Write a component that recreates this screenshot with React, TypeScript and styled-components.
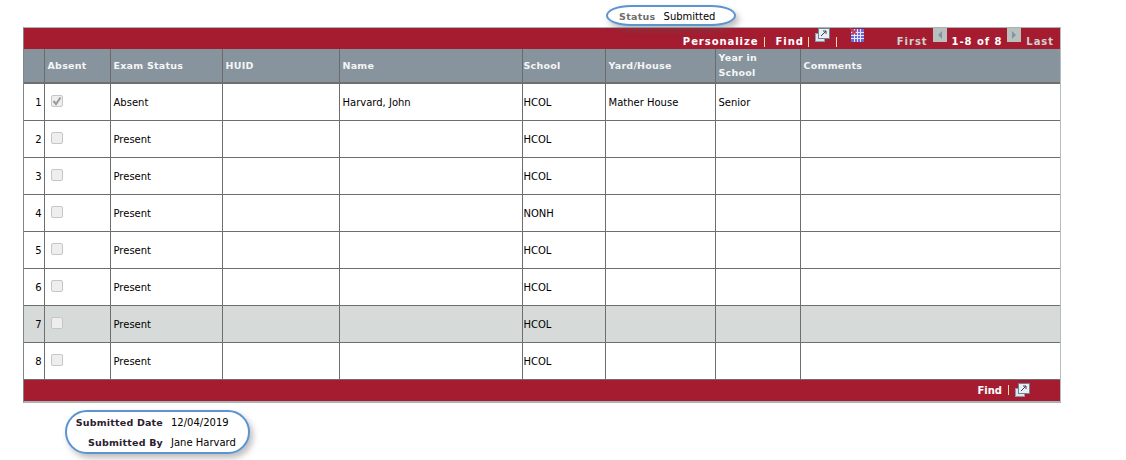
import React from "react";
import styled, { createGlobalStyle } from "styled-components";

const Global = createGlobalStyle`
  html, body { margin: 0; padding: 0; background: #fff; }
  body { font-family: "DejaVu Sans", Verdana, sans-serif; font-size: 10px; color: #000; height: 460px; overflow: hidden; }
`;

const Page = styled.div`
  width: 1126px;
  height: 460px;
  padding: 5px 0 0 23px;
  box-sizing: border-box;
  overflow: hidden;
`;

const StatusRow = styled.div`
  display: flex;
  height: 22px;
  padding-left: 583px;
`;

const Oval = styled.div<{ $w: number; $h: number; $r: string }>`
  box-sizing: border-box;
  width: ${(p) => p.$w}px;
  height: ${(p) => p.$h}px;
  border: 2px solid #5b93d3;
  border-radius: ${(p) => p.$r};
  background: #fff;
  box-shadow: 3px 4px 6px rgba(90, 90, 90, 0.4);
`;

const StatusOval = styled(Oval)`
  display: flex;
  align-items: center;
  padding: 3px 0 0 11px;
  gap: 8px;
  line-height: 12px;
`;

const StatusLabel = styled.span`
  font-weight: 700;
  font-size: 9.5px;
  letter-spacing: 0.3px;
  color: #6e6e6e;
`;

const Grid = styled.div`
  width: 1038px;
  box-sizing: border-box;
  border: 1px solid #a9b4b2;
  border-bottom-width: 2px;
  border-right-color: #b5bebc;
  border-left-color: #7d8886;
`;

const Bar = styled.div<{ $h: number }>`
  height: ${(p) => p.$h}px;
  background: #a51c30;
  display: flex;
  justify-content: flex-end;
  color: #fff;
  font-weight: 700;
  box-sizing: border-box;
`;

const TopBar = styled(Bar)`
  align-items: flex-end;
  padding: 0 6px 0 0;
  line-height: 14px;
  letter-spacing: 0.95px;
`;

const BottomBar = styled(Bar)`
  align-items: center;
  padding: 0 30px 0 0;
`;

const Sep = styled.span<{ $l: number; $r: number }>`
  display: block;
  flex: none;
  width: 1px;
  height: 10px;
  background: #f5dca0;
  margin: 0 ${(p) => p.$r}px 2px ${(p) => p.$l}px;
`;

const BottomSep = styled(Sep)`
  margin-bottom: 0;
`;

const BarText = styled.span<{ $dim?: boolean; $l?: number }>`
  flex: none;
  color: ${(p) => (p.$dim ? "#cfd3d2" : "#fff")};
  margin-left: ${(p) => p.$l ?? 0}px;
`;

const ToolIcon = styled.svg<{ $l?: number }>`
  display: block;
  align-self: flex-start;
  margin: 0 0 0 ${(p) => p.$l ?? 0}px;
  flex: none;
`;

const BottomIcon = styled(ToolIcon)`
  align-self: center;
`;

const Table = styled.table`
  border-collapse: collapse;
  table-layout: fixed;
  width: 1036px;
`;

const Th = styled.th<{ $tight?: boolean }>`
  background: #87949e;
  color: #f4f6f6;
  font-weight: 700;
  font-size: 9.5px;
  line-height: 15px;
  letter-spacing: 0.25px;
  text-align: left;
  padding: 0 3px 1px ${(p) => (p.$tight ? 1 : 3)}px;
  height: 34px;
  box-sizing: border-box;
  border-left: 1px solid #6b6b6b;
  border-bottom: 2px solid #6f6f6f;
  &:first-child { border-left: 0; }
`;

const Tr = styled.tr<{ $shade?: boolean }>`
  background: ${(p) => (p.$shade ? "#d6dbd9" : "#fff")};
`;

const Td = styled.td<{ $tight?: boolean }>`
  height: 37px;
  padding: 3px 3px 0 ${(p) => (p.$tight ? 1 : 3)}px;
  box-sizing: border-box;
  border-left: 1px solid #6e6e6e;
  border-bottom: 1px solid #6e6e6e;
  vertical-align: middle;
  line-height: 12px;
  white-space: nowrap;
  &:first-child { border-left: 0; }
`;

const NumTd = styled(Td)`
  text-align: right;
  padding: 2px 2px 0 0;
`;

const CheckTd = styled(Td)`
  padding: 0 0 1px 6px;
`;

const Check = styled.span`
  display: block;
  box-sizing: border-box;
  width: 12px;
  height: 12px;
  border: 1px solid #c6c6c6;
  border-radius: 2px;
  background: #eeeeee;
`;

const Tick = styled.svg`
  display: block;
`;

const Meta = styled.div`
  margin: 7px 0 0 42px;
`;

const MetaOval = styled(Oval)`
  display: grid;
  grid-template-columns: 96px auto;
  column-gap: 8px;
  align-content: center;
  row-gap: 8px;
  padding-top: 2px;
  line-height: 12px;
`;

const MetaLabel = styled.span`
  font-weight: 700;
  font-size: 9.5px;
  letter-spacing: 0.2px;
  text-align: right;
  white-space: nowrap;
  color: #2b2030;
`;

const PopGlyph = () => (
  <>
    <rect x="0.5" y="5.5" width="9" height="8" fill="#dfe6ea" stroke="#8a9ab0" />
    <rect x="3.5" y="0.5" width="11" height="10" fill="#e8eef2" stroke="#6f819c" />
    <path d="M6 8 L11 3 M8 3 H11 V6" fill="none" stroke="#444" strokeWidth="1" />
  </>
);

const GridIcon = () => (
  <ToolIcon width="14" height="14" viewBox="0 0 14 14" $l={13}>
    <rect x="1" y="1" width="13" height="13" fill="#6a6adc" />
    <path d="M1 4.5H14M1 7.5H14M1 10.5H14M4.5 1V14M7.5 1V14M10.5 1V14" stroke="#e6e6fa" strokeWidth="1" />
    <path d="M0 0 L5 5 M2 5 H5 V2" stroke="#e03030" strokeWidth="1.4" fill="none" />
  </ToolIcon>
);

const ArrowBtn = ({ dir, l }: { dir: "l" | "r"; l: number }) => (
  <ToolIcon width="14" height="14" viewBox="0 0 14 14" $l={l}>
    <rect width="14" height="14" fill="#b9c1bf" />
    <path d={dir === "l" ? "M9 3 V11 L5 7 Z" : "M5 3 V11 L9 7 Z"} fill="#87949e" />
  </ToolIcon>
);

const widths = [20, 66, 112, 117, 183, 83, 110, 85, 260];
const heads = ["", "Absent", "Exam Status", "HUID", "Name", "School", "Yard/House", "Year in School", "Comments"];
const rows: { status: string; school: string; name?: string; yard?: string; year?: string; on?: boolean; shade?: boolean }[] = [
  { status: "Absent", school: "HCOL", name: "Harvard, John", yard: "Mather House", year: "Senior", on: true },
  { status: "Present", school: "HCOL" },
  { status: "Present", school: "HCOL" },
  { status: "Present", school: "NONH" },
  { status: "Present", school: "HCOL" },
  { status: "Present", school: "HCOL" },
  { status: "Present", school: "HCOL", shade: true },
  { status: "Present", school: "HCOL" },
];

export default function App() {
  return (
    <Page>
      <Global />
      <StatusRow>
        <StatusOval $w={130} $h={21} $r="26px / 11px">
          <StatusLabel>Status</StatusLabel>
          <span>Submitted</span>
        </StatusOval>
      </StatusRow>
      <Grid>
        <TopBar $h={21}>
          <BarText>Personalize</BarText>
          <Sep $l={5} $r={11} />
          <BarText>Find</BarText>
          <Sep $l={4} $r={6} />
          <ToolIcon width="15" height="14" viewBox="0 0 15 14"><PopGlyph /></ToolIcon>
          <Sep $l={6} $r={0} />
          <GridIcon />
          <BarText $dim $l={33}>First</BarText>
          <ArrowBtn dir="l" l={5} />
          <BarText $l={5}>1-8 of 8</BarText>
          <ArrowBtn dir="r" l={5} />
          <BarText $dim $l={5}>Last</BarText>
        </TopBar>
        <Table>
          <colgroup>
            {widths.map((w, i) => (
              <col key={i} style={{ width: w }} />
            ))}
          </colgroup>
          <thead>
            <tr>
              {heads.map((h, i) => (
                <Th key={i} $tight={h === "School"}>{h}</Th>
              ))}
            </tr>
          </thead>
          <tbody>
            {rows.map((r, i) => (
              <Tr key={i} $shade={r.shade}>
                <NumTd>{i + 1}</NumTd>
                <CheckTd>
                  <Check>
                    {r.on && (
                      <Tick width="10" height="10" viewBox="0 0 10 10">
                        <path d="M1.5 5 L4 8 L8.5 1.5" fill="none" stroke="#9a9a9a" strokeWidth="2" />
                      </Tick>
                    )}
                  </Check>
                </CheckTd>
                <Td>{r.status}</Td>
                <Td />
                <Td>{r.name}</Td>
                <Td $tight>{r.school}</Td>
                <Td>{r.yard}</Td>
                <Td>{r.year}</Td>
                <Td />
              </Tr>
            ))}
          </tbody>
        </Table>
        <BottomBar $h={21}>
          <BarText>Find</BarText>
          <BottomSep $l={6} $r={6} />
          <BottomIcon width="15" height="14" viewBox="0 0 15 14"><PopGlyph /></BottomIcon>
        </BottomBar>
      </Grid>
      <Meta>
        <MetaOval $w={185} $h={44} $r="22px">
          <MetaLabel>Submitted Date</MetaLabel>
          <span>12/04/2019</span>
          <MetaLabel>Submitted By</MetaLabel>
          <span>Jane Harvard</span>
        </MetaOval>
      </Meta>
    </Page>
  );
}
